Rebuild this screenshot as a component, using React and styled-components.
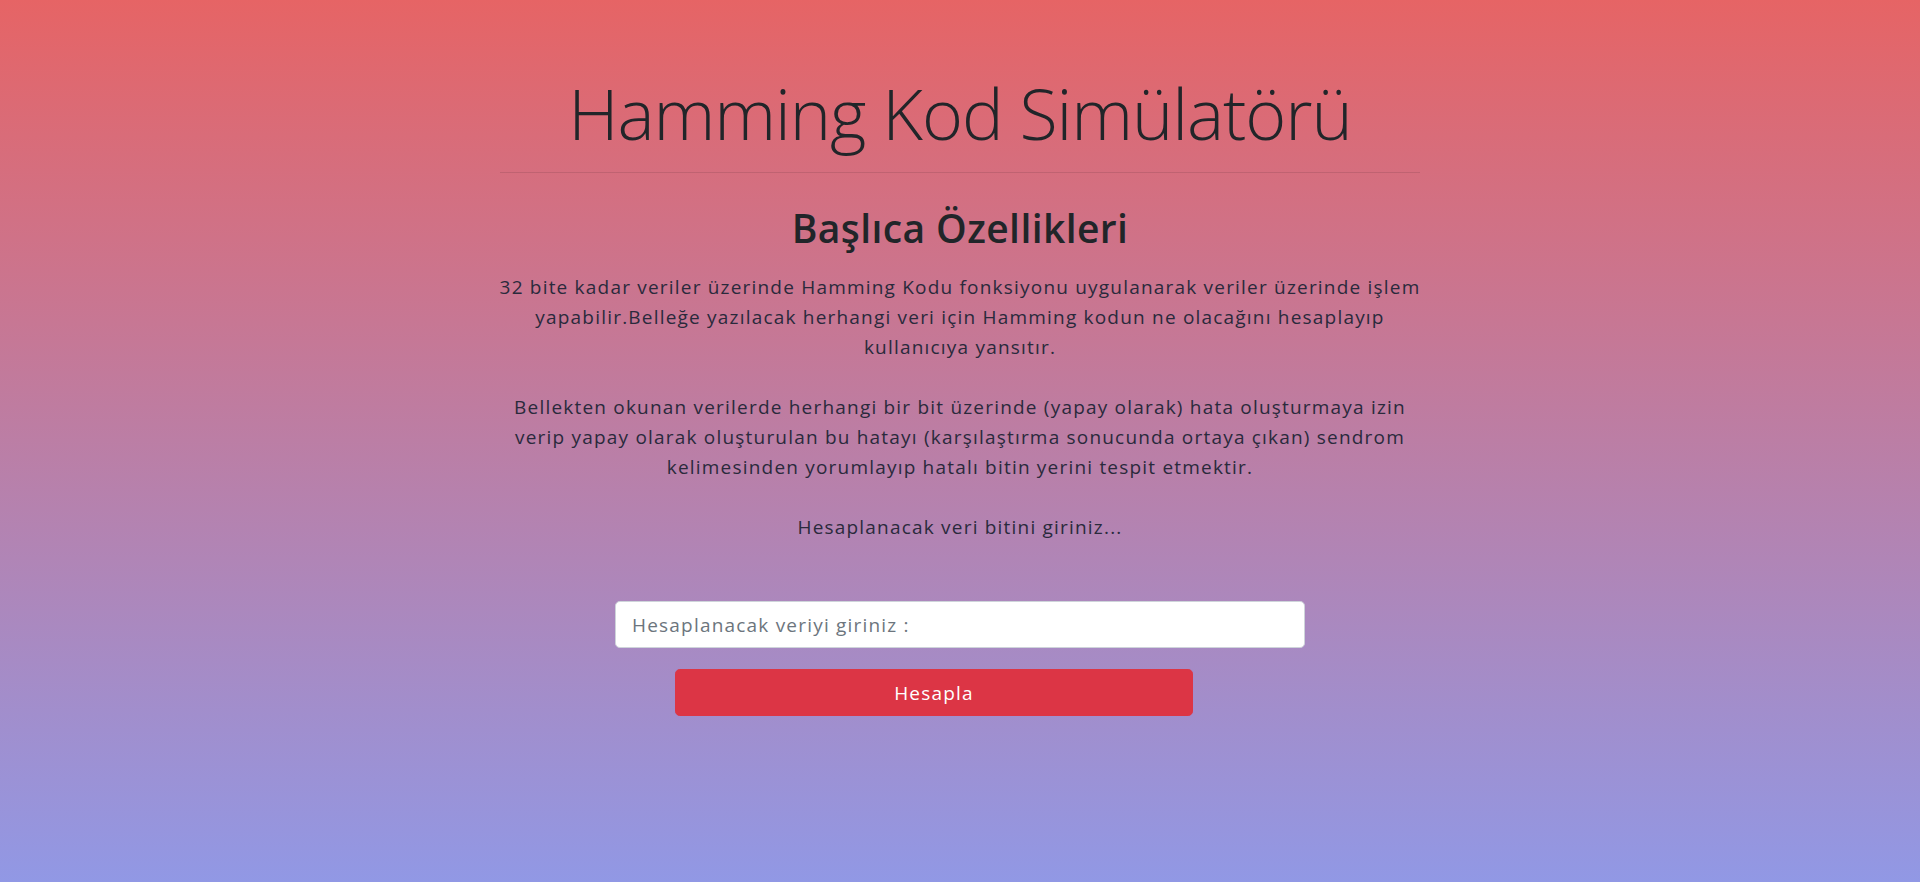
import styled, { createGlobalStyle } from "styled-components";

const GlobalStyle = createGlobalStyle`
  html, body {
    margin: 0;
    padding: 0;
  }

  body {
    font-family: "Open Sans", "Noto Sans", sans-serif;
    color: #212529;
    background: linear-gradient(#e66465, #9198e5);
    background-attachment: fixed;
    min-height: 100vh;
  }

  * {
    box-sizing: border-box;
  }
`

const Page = styled.div`
  min-height: 100vh;
  display: flex;
  flex-direction: column;
  align-items: center;
`

const Jumbo = styled.div`
  width: 920px;
  padding-top: 71px;
  display: flex;
  flex-direction: column;
  align-items: center;
`

const Title = styled.h1`
  margin: 0;
  font-size: 70px;
  line-height: 84px;
  font-weight: 300;
  letter-spacing: -1.1px;
  color: #212529;
`

const Divider = styled.hr`
  width: 100%;
  margin: 17px 0 0;
  border: 0;
  border-top: 1px solid rgba(0, 0, 0, 0.1);
`

const SubTitle = styled.h2`
  margin: 31px 0 0;
  font-size: 39px;
  line-height: 47px;
  font-weight: 600;
  letter-spacing: 0.4px;
  color: #212529;
`

const Lead = styled.p`
  margin: 21px 0 0;
  font-size: 19px;
  line-height: 30px;
  font-weight: 400;
  letter-spacing: 1.2px;
  text-align: center;
  white-space: nowrap;
  color: #2a2a3c;
`

const Form = styled.form`
  width: 690px;
  margin-top: 59px;
  display: flex;
  flex-direction: column;
`

const Input = styled.input`
  width: 100%;
  height: 47px;
  padding: 0 16px;
  font-family: inherit;
  font-size: 19px;
  letter-spacing: 1.2px;
  color: #495057;
  background: #fff;
  border: 1px solid #ced4da;
  border-radius: 4.8px;
  outline: none;

  &::placeholder {
    color: #6c757d;
  }
`

const Button = styled.button`
  width: 518px;
  height: 47px;
  margin: 21px 0 0 60px;
  font-family: inherit;
  font-size: 19px;
  letter-spacing: 1.2px;
  color: #fff;
  background: #dc3545;
  border: 1px solid #dc3545;
  border-radius: 4.8px;
  cursor: pointer;
`

export default function App() {
    return (
        <Page>
            <GlobalStyle />
            <Jumbo>
                <Title>Hamming Kod Simülatörü</Title>
                <Divider />
                <SubTitle>Başlıca Özellikleri</SubTitle>
                <Lead>
                    32 bite kadar veriler üzerinde Hamming Kodu fonksiyonu uygulanarak veriler üzerinde işlem<br />
                    yapabilir.Belleğe yazılacak herhangi veri için Hamming kodun ne olacağını hesaplayıp<br />
                    kullanıcıya yansıtır.<br />
                    <br />
                    Bellekten okunan verilerde herhangi bir bit üzerinde (yapay olarak) hata oluşturmaya izin<br />
                    verip yapay olarak oluşturulan bu hatayı (karşılaştırma sonucunda ortaya çıkan) sendrom<br />
                    kelimesinden yorumlayıp hatalı bitin yerini tespit etmektir.<br />
                    <br />
                    Hesaplanacak veri bitini giriniz...
                </Lead>
            </Jumbo>
            <Form onSubmit={(e) => e.preventDefault()}>
                <Input type="text" placeholder="Hesaplanacak veriyi giriniz :" />
                <Button type="submit">Hesapla</Button>
            </Form>
        </Page>
    )
}
